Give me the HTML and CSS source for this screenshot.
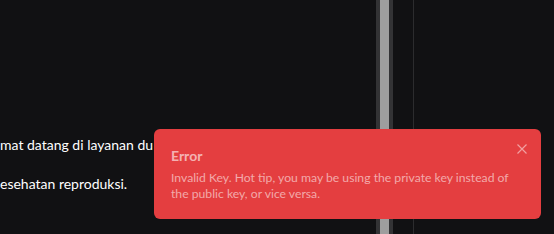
FILE: index.html
```html
<!DOCTYPE html>
<html lang="id">
<head>
<meta charset="utf-8">
<link rel="stylesheet" href="styles.css">
</head>
<body>
<div class="app">
  <main class="main">
    <p class="msg">mat datang di layanan du</p>
    <p class="msg">esehatan reproduksi.</p>
  </main>
  <div class="track"><div class="thumb"></div></div>
  <div class="spacer"></div>
  <aside class="side"></aside>
</div>
<div class="toast" role="alert">
  <div class="toast-title">Error</div>
  <div class="toast-body">Invalid Key. Hot tip, you may be using the private key instead of the public key, or vice versa.</div>
  <button class="toast-close" aria-label="Close">
    <svg width="10" height="10" viewBox="0 0 10 10"><path d="M0.5 0.5L9.5 9.5M9.5 0.5L0.5 9.5" stroke="currentColor" stroke-width="1.2" fill="none"/></svg>
  </button>
</div>
</body>
</html>
```

FILE: styles.css
```css
html, body {
  margin: 0;
  padding: 0;
  height: 100%;
  background: #111113;
  overflow: hidden;
}
body {
  font-family: Lato, "Noto Sans", sans-serif;
}
.app {
  display: flex;
  height: 234px;
}
.main {
  width: 376px;
  flex: none;
  padding-top: 136px;
  overflow: hidden;
  white-space: nowrap;
}
.msg {
  margin: 0 0 21px;
  color: #ffffff;
  font-size: 14px;
  line-height: 18px;
}
.track {
  width: 17px;
  flex: none;
  background: #333335;
  display: flex;
  justify-content: center;
}
.thumb {
  width: 9px;
  background: #9e9e9e;
}
.spacer {
  width: 20px;
  flex: none;
}
.side {
  flex: 1;
  border-left: 1px solid #2c2c2e;
}
.toast {
  position: absolute;
  left: 154px;
  top: 129px;
  width: 387px;
  height: 90px;
  box-sizing: border-box;
  background: #e43e40;
  border-radius: 6px;
  padding: 18px 26px 0 17px;
}
.toast-title {
  color: rgba(255, 255, 255, 0.62);
  font-weight: 700;
  font-size: 14px;
  line-height: 18px;
  margin-bottom: 5px;
}
.toast-body {
  color: rgba(255, 255, 255, 0.56);
  font-size: 12.2px;
  line-height: 16px;
}
.toast-close {
  position: absolute;
  right: 12px;
  top: 13px;
  width: 14px;
  height: 14px;
  padding: 2px;
  border: 0;
  background: none;
  color: rgba(255, 255, 255, 0.5);
  display: flex;
  align-items: center;
  justify-content: center;
}
```
